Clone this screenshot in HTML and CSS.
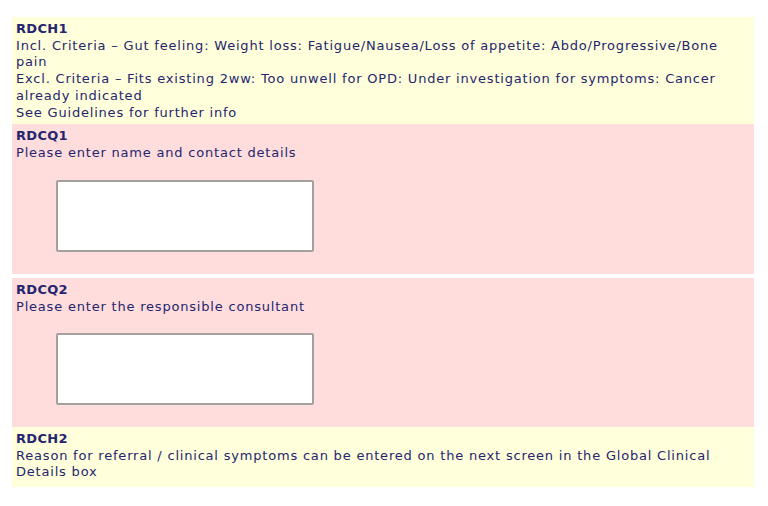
FILE: index.html
```html
<!DOCTYPE html>
<html>
<head>
<meta charset="utf-8">
<link rel="stylesheet" href="styles.css">
</head>
<body>
<div class="panel">
  <section class="block note first">
    <div class="title">RDCH1</div>
    <div>Incl. Criteria – Gut feeling: Weight loss: Fatigue/Nausea/Loss of appetite: Abdo/Progressive/Bone pain</div>
    <div>Excl. Criteria – Fits existing 2ww: Too unwell for OPD: Under investigation for symptoms: Cancer already indicated</div>
    <div>See Guidelines for further info</div>
  </section>
  <section class="block question q1">
    <div class="title">RDCQ1</div>
    <div>Please enter name and contact details</div>
    <textarea class="field"></textarea>
  </section>
  <section class="block question q2">
    <div class="title">RDCQ2</div>
    <div>Please enter the responsible consultant</div>
    <textarea class="field"></textarea>
  </section>
  <section class="block note last">
    <div class="title">RDCH2</div>
    <div>Reason for referral / clinical symptoms can be entered on the next screen in the Global Clinical Details box</div>
  </section>
</div>
</body>
</html>
```
FILE: styles.css
```css
html, body {
  margin: 0;
  padding: 0;
  background: #ffffff;
}
body {
  padding: 17px 0 0 12px;
  font-family: "DejaVu Sans", Verdana, sans-serif;
  font-size: 13px;
  letter-spacing: 0.8px;
  line-height: 16.7px;
  color: #25256e;
}
.panel {
  width: 742px;
  display: flex;
  flex-direction: column;
}
.block {
  padding: 4px 12px 0 4px;
  box-sizing: border-box;
}
.title {
  font-weight: bold;
  letter-spacing: 0.3px;
}
.note {
  background: #ffffdc;
}
.first {
  height: 107px;
}
.last {
  height: 60px;
}
.question {
  background: #ffdddd;
  display: flex;
  flex-direction: column;
  align-items: flex-start;
}
.q1 {
  height: 150px;
  margin-bottom: 4px;
}
.q2 {
  height: 149px;
}
.field {
  margin: 19px 0 0 40px;
  width: 258px;
  height: 72px;
  box-sizing: border-box;
  border: 2px solid #a3a0a0;
  border-radius: 2px;
  background: #ffffff;
  resize: none;
  padding: 0;
}
.q2 .field {
  margin-top: 18px;
}
```
